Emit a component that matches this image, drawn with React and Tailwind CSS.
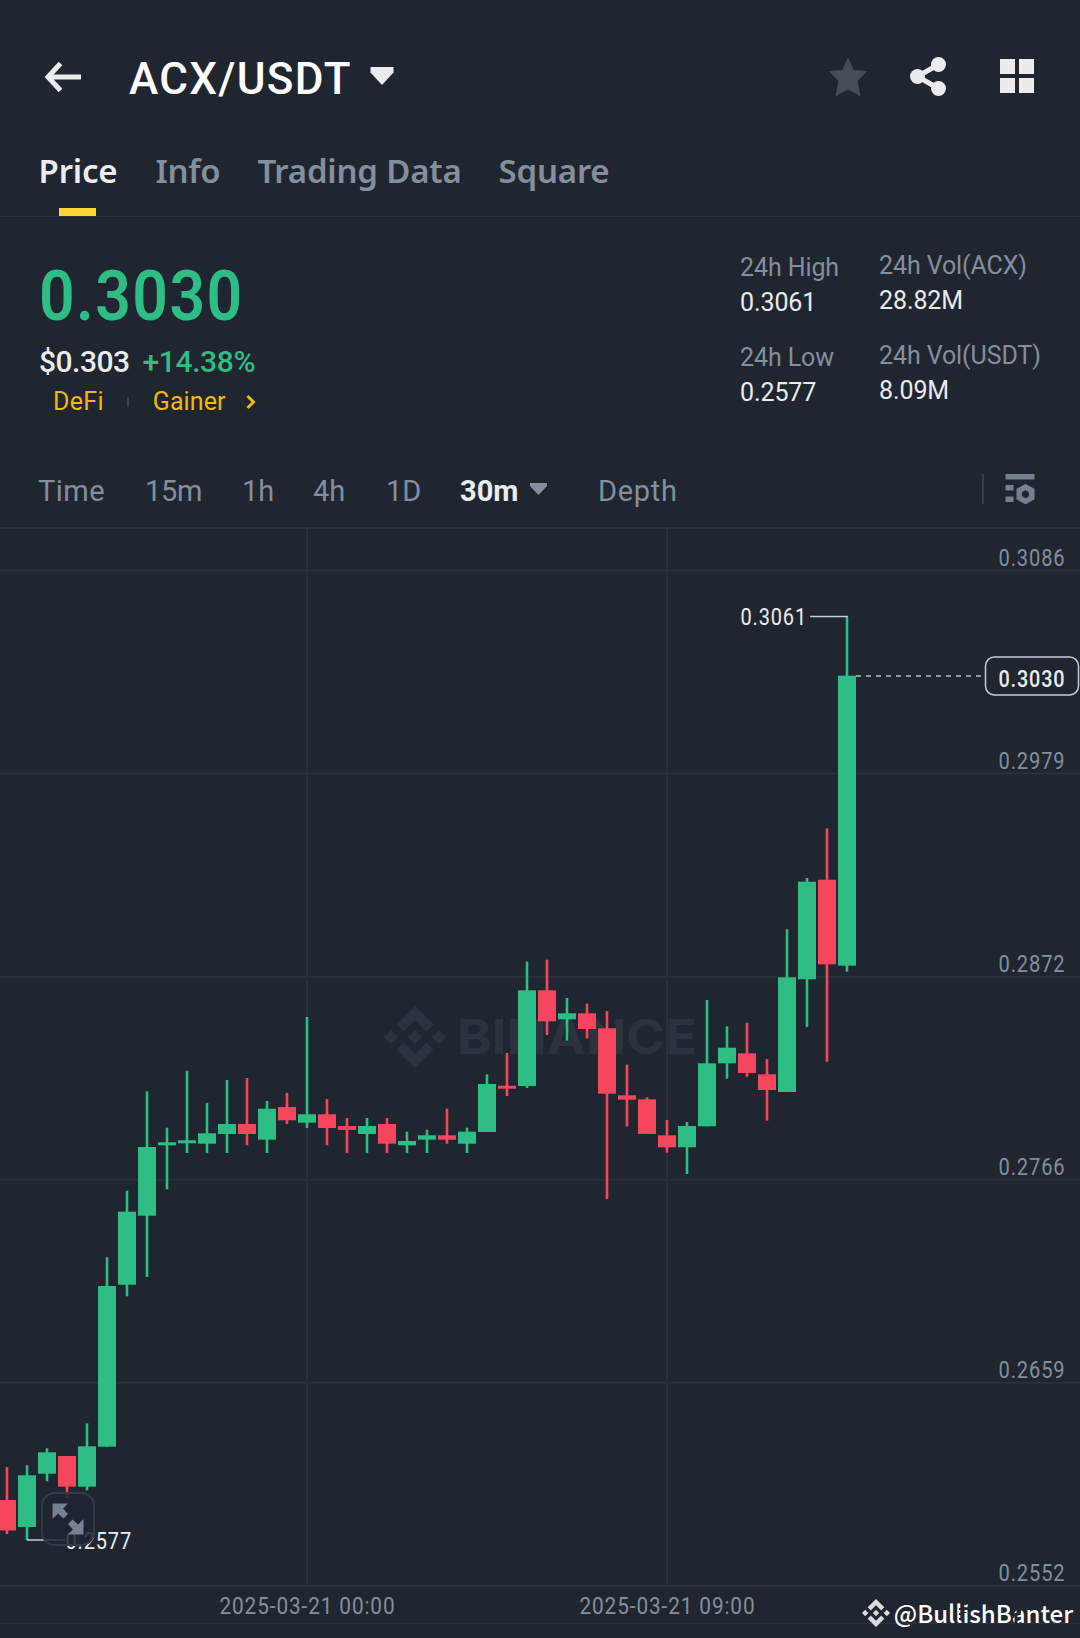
const tabs = [
  { name: "Price", active: true, width: "w-[78px]" },
  { name: "Info", width: "w-[66px]" },
  { name: "Trading Data", width: "w-[201px]" },
  { name: "Square", width: "w-[112px]" },
];

const stats = [
  [
    { label: "24h High", value: "0.3061" },
    { label: "24h Low", value: "0.2577" },
  ],
  [
    { label: "24h Vol(ACX)", value: "28.82M" },
    { label: "24h Vol(USDT)", value: "8.09M" },
  ],
];

const intervals = [
  { name: "Time", width: "w-[107px] tracking-[0.5px]" },
  { name: "15m", width: "w-[97px] tracking-[-0.3px]" },
  { name: "1h", width: "w-[71px]" },
  { name: "4h", width: "w-[73px]" },
  { name: "1D", width: "w-[74px]" },
];

const priceLines = [
  { y: 570.5, price: "0.3086" },
  { y: 773.5, price: "0.2979" },
  { y: 976.7, price: "0.2872" },
  { y: 1179.7, price: "0.2766" },
  { y: 1382.8, price: "0.2659" },
  { y: 1586, price: "0.2552" },
];

// [up, wick top, body top, body bottom, wick bottom]
const candles = [
  [0, 1467, 1500, 1530.5, 1534],
  [1, 1465.3, 1475.3, 1527, 1540],
  [1, 1448.3, 1452.3, 1473.7, 1481.3],
  [0, 1456, 1456, 1486.7, 1498],
  [1, 1423.3, 1446.3, 1486.7, 1490.3],
  [1, 1257.3, 1286, 1446.7, 1446.7],
  [1, 1190.7, 1211.7, 1284.7, 1296.3],
  [1, 1091.3, 1147, 1215.7, 1277],
  [1, 1127.7, 1142.3, 1145.3, 1189.3],
  [1, 1070.7, 1140.3, 1143.3, 1153],
  [1, 1103, 1133.3, 1143.7, 1153],
  [1, 1080, 1124, 1134, 1153],
  [0, 1078, 1124, 1134, 1145.3],
  [1, 1101, 1108.7, 1139.7, 1153],
  [0, 1093, 1107, 1120.3, 1124],
  [1, 1017, 1114.3, 1122.7, 1128],
  [0, 1099, 1114.3, 1128, 1145.3],
  [0, 1118, 1126, 1130, 1153],
  [1, 1118, 1126, 1134, 1153],
  [0, 1118, 1124, 1143.7, 1153],
  [1, 1131.7, 1141, 1145.3, 1153],
  [1, 1129.7, 1135.3, 1139.7, 1153],
  [0, 1108.7, 1135.3, 1139.7, 1143.7],
  [1, 1127.7, 1131.7, 1143.7, 1153],
  [1, 1074.3, 1084, 1132, 1132],
  [0, 1053, 1085.7, 1088.7, 1096],
  [1, 961.7, 990.3, 1086, 1088],
  [0, 959.7, 990.3, 1021.3, 1035],
  [1, 998, 1013.3, 1019.3, 1040.7],
  [0, 1003.7, 1013.3, 1029, 1038.3],
  [0, 1011, 1028.3, 1093.7, 1199],
  [0, 1064.7, 1095.3, 1099.7, 1126.3],
  [0, 1097.3, 1099.3, 1134, 1134],
  [0, 1120, 1135.3, 1147.3, 1152.7],
  [1, 1122, 1126, 1147.3, 1174],
  [1, 1000, 1063.3, 1126.3, 1126.3],
  [1, 1026.3, 1047.7, 1063.3, 1078.7],
  [0, 1022.7, 1053.3, 1073, 1076.7],
  [0, 1059, 1074.3, 1090, 1120.7],
  [1, 929.3, 977.3, 1092, 1092],
  [1, 878, 881.7, 979.3, 1027],
  [0, 828.3, 879.7, 964.3, 1061.7],
  [1, 616.7, 675.7, 965.7, 971.7],
];

function BinanceMark(props) {
  return (
    <svg viewBox="0 0 62 62" fill="currentColor" {...props}>
      <path d="M31 0 49.5 18.5 42.5 25.5 31 14 19.5 25.5 12.5 18.5Z" />
      <path d="M31 62 49.5 43.5 42.5 36.5 31 48 19.5 36.5 12.5 43.5Z" />
      <path d="M7 24 14 31 7 38 0 31ZM55 24 62 31 55 38 48 31ZM31 24 38 31 31 38 24 31Z" />
    </svg>
  );
}

function Header() {
  return (
    <header className="flex h-[145px] items-start pt-[57px] pl-[44px] pr-[46px]">
      <svg className="mt-[4px] h-[32px] w-[38px]" viewBox="0 0 38 32" fill="none" stroke="#eaecef" strokeWidth="5">
        <path d="M3.5 16H37M16.5 2.5 4 16 16.5 29.5" />
      </svg>
      <h1 className="ml-[47px] w-[223px] text-[44px] leading-[44px] font-medium tracking-[1.3px] whitespace-nowrap text-white">
        ACX/USDT
      </h1>
      <svg className="mt-[10px] ml-[18px] h-[18px] w-[24px]" viewBox="0 0 24 18" fill="#eaecef">
        <path d="M0.5 0H23.5V5.5L12 18 0.5 5.5Z" />
      </svg>

      <div className="ml-auto flex items-start">
        <svg className="mt-[1px] h-[38px] w-[38px]" viewBox="0 0 38 38" fill="#474d57" stroke="#474d57" strokeWidth="1" strokeLinejoin="round">
          <path d="M19 0.5 24.5 12.5 37.5 13.5 28 23 31 37.5 19 31 7 37.5 10 23 0.5 13.5 13.5 12.5Z" />
        </svg>
        <svg className="ml-[43px] h-[39px] w-[36px]" viewBox="0 0 36 39" fill="#eaecef">
          <path d="M28.5 7.5 7.5 19.5 28.5 31.5" fill="none" stroke="#eaecef" strokeWidth="5" />
          <circle cx="28.5" cy="7.5" r="7.5" />
          <circle cx="7.5" cy="19.5" r="7.5" />
          <circle cx="28.5" cy="31.5" r="7.5" />
        </svg>
        <div className="mt-[2px] ml-[54px] grid grid-cols-2 gap-[4px]">
          <span className="h-[15px] w-[15px] bg-[#eaecef]" />
          <span className="h-[15px] w-[15px] bg-[#eaecef]" />
          <span className="h-[15px] w-[15px] bg-[#eaecef]" />
          <span className="h-[15px] w-[15px] bg-[#eaecef]" />
        </div>
      </div>
    </header>
  );
}

function Tabs() {
  return (
    <nav className="flex h-[72px] gap-[38px] border-b border-[#2b313b] pl-[39px] font-['Noto_Sans',sans-serif] text-[33px] font-semibold">
      {tabs.map((tab) => (
        <div key={tab.name} className={`flex h-full flex-col items-center justify-between whitespace-nowrap ${tab.width} ${tab.active ? "text-[#eaecef]" : "text-[#848e9c]"}`}>
          <span className="pt-[5px] leading-[42px] tracking-[-0.2px]">{tab.name}</span>
          {tab.active && <span className="mr-[2px] h-[8px] w-[37px] bg-[#fcd535]" />}
        </div>
      ))}
    </nav>
  );
}

function Ticker() {
  return (
    <section className="flex h-[232px] justify-between pl-[39px]">
      <div className="pt-[45px]">
        <div className="w-[230px] origin-left scale-x-[0.88] text-[71px] leading-[68px] font-semibold tracking-[1.6px] text-[#2ebd85]">0.3030</div>
        <div className="mt-[12px] flex gap-[13px] text-[30px] leading-[40px] font-medium">
          <span className="tracking-[-0.5px] text-[#eaecef]">$0.303</span>
          <span className="tracking-[-0.4px] text-[#2ebd85]">+14.38%</span>
        </div>
        <div className="mt-[1px] flex items-center pl-[14px] text-[25px] leading-[38px] text-[#f0b90b]">
          <span className="tracking-[0.3px]">DeFi</span>
          <span className="ml-[23px] h-[10px] w-[2px] bg-[#3a414c]" />
          <span className="ml-[24px] tracking-[0.1px]">Gainer</span>
          <svg className="ml-[20px] h-[14px] w-[10px]" viewBox="0 0 10 14" fill="none" stroke="#f0b90b" strokeWidth="3">
            <path d="M1.5 1 7.5 7 1.5 13" />
          </svg>
        </div>
      </div>

      <div className="flex">
        {stats.map((column, i) => (
          <div key={i} className={i === 0 ? "w-[139px] pt-[33px]" : "w-[201px] pt-[31px]"}>
            {column.map((stat) => (
              <div key={stat.label} className="mb-[20px] text-[25px] leading-[35px] whitespace-nowrap">
                <div className="tracking-[-0.1px] text-[#848e9c]">{stat.label}</div>
                <div className="tracking-[-0.1px] text-[#eaecef]">{stat.value}</div>
              </div>
            ))}
          </div>
        ))}
      </div>
    </section>
  );
}

function Intervals() {
  return (
    <div className="flex h-[78px] items-center pt-[7px] pr-[45px] pl-[38px] text-[29px] text-[#848e9c]">
      {intervals.map((item) => (
        <span key={item.name} className={item.width}>{item.name}</span>
      ))}
      <span className="w-[70px] font-bold text-[#eaecef]">30m</span>
      <svg className="mb-[5px] h-[12px] w-[17px]" viewBox="0 0 17 12" fill="#848e9c">
        <path d="M0 0H17V3L8.5 12 0 3Z" />
      </svg>
      <span className="ml-[51px] tracking-[0.7px]">Depth</span>
      <span className="mb-[6px] ml-auto h-[30px] w-[2px] bg-[#3a414c]" />
      <svg className="mb-[6px] ml-[21px] h-[30px] w-[30px]" viewBox="0 0 30 30" fill="#76808f">
        <path d="M0.5 0H29.5V5.5H0.5ZM0.5 11H8.5V16.5H0.5ZM0.5 22.5H8.5V28H0.5Z" />
        <path fillRule="evenodd" d="M20.5 10 29.5 14.7V25.3L20.5 30.5 11.5 25.3V14.7ZM20.5 16.5a3.7 3.7 0 1 0 0.01 0Z" />
      </svg>
    </div>
  );
}

function Chart() {
  return (
    <div className="relative h-[1111px]">
      <svg className="block h-[1111px] w-[1080px]" viewBox="0 527 1080 1111" fontFamily="Roboto, sans-serif" fontSize="23">
        {/* Grid */}
        <g stroke="#2b313b" strokeWidth="2">
          <path d="M0 528H1080M307 528V1586M667 528V1586" />
          {priceLines.map((line) => (
            <path key={line.price} d={`M0 ${line.y}H1080`} />
          ))}
          <path d="M0 1623.5H1080" strokeWidth="1.5" />
        </g>

        {/* Watermark */}
        <g color="#2d333e" fill="#2d333e">
          <BinanceMark x="384" y="1006" width="62" height="62" />
          <text x="457" y="1054" fontSize="48" fontWeight="700" fontFamily="Inter, sans-serif" textLength="240" lengthAdjust="spacingAndGlyphs">BINANCE</text>
        </g>

        {/* Candles */}
        {candles.map(([up, high, top, bottom, low], i) => (
          <g key={i} fill={up ? "#2ebd85" : "#f6465d"}>
            <rect x={5.7 + i * 20} y={high} width="2.6" height={low - high} />
            <rect x={-2 + i * 20} y={top} width="18" height={bottom - top} />
          </g>
        ))}

        {/* High / low markers */}
        <g fill="#eaecef" letterSpacing="1">
          <path d="M810 616.5H848M27 1540H65" stroke="#c8ccd3" strokeWidth="1.5" />
          <text x="740.5" y="625.2" textLength="66.5" lengthAdjust="spacingAndGlyphs">0.3061</text>
          <text x="65.5" y="1549.2" textLength="66.5" lengthAdjust="spacingAndGlyphs">0.2577</text>
        </g>

        {/* Axis labels */}
        <g fill="#848e9c" letterSpacing="1">
          {priceLines.map((line) => (
            <text key={line.price} x="998.5" y={line.y - 4.7} textLength="67" lengthAdjust="spacingAndGlyphs">{line.price}</text>
          ))}
          <text x="219.5" y="1614.2" textLength="176" lengthAdjust="spacingAndGlyphs">2025-03-21 00:00</text>
          <text x="579.5" y="1614.2" textLength="176" lengthAdjust="spacingAndGlyphs">2025-03-21 09:00</text>
        </g>

        {/* Last price */}
        <path d="M856 676H982" stroke="#b7bdc6" strokeWidth="1.5" strokeDasharray="5 5" />
        <rect x="985.5" y="657" width="93" height="38" rx="9" fill="#1f2630" stroke="#c8ccd3" strokeWidth="1.5" />
        <text x="998.5" y="687.2" fill="#eaecef" fontWeight="500" letterSpacing="1" textLength="67" lengthAdjust="spacingAndGlyphs">0.3030</text>
      </svg>

      <button className="absolute top-[965px] left-[41px] flex h-[54px] w-[54px] items-center justify-center rounded-[14px] border-2 border-[#353b46] bg-[#1f2630]/85">
        <svg className="h-[32px] w-[32px]" viewBox="0 0 32 32" fill="#76808f">
          <path d="M0.5 0.5H16L11 5.5 16 11 11.5 15.5 6 10.5 0.5 16Z" />
          <path d="M31.5 31.5H16L21 26.5 16 21 20.5 16.5 26 21.5 31.5 16Z" />
        </svg>
      </button>

      <div className="absolute right-[7px] bottom-[9px] flex items-center gap-[4px] text-white">
        <BinanceMark className="h-[28px] w-[28px] text-[#d9dbde]" />
        <span className="relative font-['Noto_Sans_CJK_SC',sans-serif] text-[24px] leading-[32px] font-medium">
          @BullishBanter
          <svg className="absolute top-0 left-0 h-[32px] w-[180px]" viewBox="0 0 180 32" fill="none" stroke="#1f2630">
            <path d="M66 11V26" strokeWidth="2" strokeDasharray="2 3" />
            <path d="M71 7V17" strokeWidth="3" strokeDasharray="1 3" />
            <path d="M116 10H127V16H122.5V13L117 20Z" fill="#1f2630" stroke="none" />
            <path d="M122 18V27" strokeWidth="3" />
          </svg>
        </span>
      </div>
    </div>
  );
}

export default function App() {
  return (
    <div className="h-[1638px] w-[1080px] overflow-hidden bg-[#1f2630] font-['Roboto',sans-serif]">
      <Header />
      <Tabs />
      <Ticker />
      <Intervals />
      <Chart />
    </div>
  );
}
